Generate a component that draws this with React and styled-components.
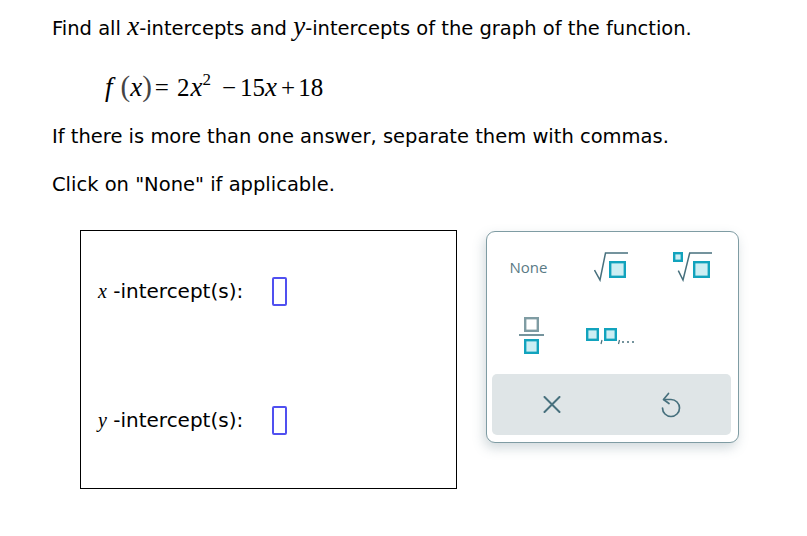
import React from "react";
import styled, { createGlobalStyle } from "styled-components";

const GlobalStyle = createGlobalStyle`
  html, body {
    margin: 0;
    padding: 0;
    background: #fff;
  }
`;

const Page = styled.div`
  width: 807px;
  height: 536px;
  padding: 14px 0 0 52px;
  box-sizing: border-box;
  font-family: "DejaVu Sans", Verdana, sans-serif;
  font-size: 19.5px;
  color: #000;
  overflow: hidden;
`;

const Line = styled.div`
  height: 24px;
  line-height: 24px;
  margin-bottom: ${(p) => p.$gap || 0}px;
  white-space: nowrap;
`;

const MathVar = styled.span`
  font-family: "Liberation Serif", "Times New Roman", serif;
  font-style: italic;
  font-size: ${(p) => p.$size || 27}px;
`;

const Equation = styled.div`
  height: 40px;
  line-height: 40px;
  margin: 0 0 19px 53px;
  font-family: "Liberation Serif", "Times New Roman", serif;
  font-size: 25px;
  white-space: nowrap;
`;

const Term = styled.span`
  margin-left: ${(p) => p.$ml || 0}px;
`;

const EqVar = styled.span`
  margin-left: ${(p) => p.$ml || 0}px;
  font-style: italic;
  font-size: 27px;
`;

const Paren = styled.span`
  margin-left: ${(p) => p.$ml || 0}px;
  color: #444;
  font-size: 29px;
`;

const Sup = styled.span`
  font-size: 17px;
  line-height: 0;
  vertical-align: 11px;
`;

const Work = styled.div`
  display: flex;
  align-items: flex-start;
  margin: 33px 0 0 28px;
`;

const AnswerBox = styled.div`
  width: 377px;
  height: 259px;
  box-sizing: border-box;
  border: 1px solid #000;
  padding: 40px 0 0 17px;
  display: flex;
  flex-direction: column;
  gap: 89px;
`;

const AnswerRow = styled.div`
  display: flex;
  align-items: center;
  height: 40px;
`;

const Label = styled.span`
  display: flex;
  align-items: baseline;
  width: 174px;
  font-size: 20px;
  white-space: nowrap;
`;

const Blank = styled.span`
  width: 15px;
  height: 29px;
  box-sizing: border-box;
  border: 2px solid #5050f0;
  border-radius: 2px;
`;

const Keypad = styled.div`
  width: 253px;
  height: 212px;
  box-sizing: border-box;
  margin: 1px 0 0 29px;
  border: 1px solid #7f9ca3;
  border-radius: 9px;
  background: #fff;
  box-shadow: -2px 5px 12px rgba(90, 120, 130, 0.28);
  padding: 5px 7px 6px 5px;
  display: flex;
  flex-direction: column;
`;

const KeyGrid = styled.div`
  display: grid;
  grid-template-columns: 78px 82px 82px;
  grid-template-rows: 60px 77px;
`;

const Key = styled.div`
  display: flex;
  align-items: center;
  justify-content: center;
`;

const NoneKey = styled(Key)`
  padding-right: 5px;
  color: #5a7a85;
  font-size: 15px;
  font-family: "Open Sans", "Noto Sans", sans-serif;
`;

const ActionBar = styled.div`
  height: 61px;
  border-radius: 5px;
  background: #dfe5e7;
  display: grid;
  grid-template-columns: 1fr 1fr;
`;

const ActionKey = styled.div`
  display: flex;
  align-items: center;
  justify-content: center;
`;

const Slate = "#47707d";
const Teal = "#12a3bd";
const Fill = "#cdeef3";

const Square = ({ x, y, w, h, grey }) => (
  <rect
    x={x}
    y={y}
    width={w}
    height={h}
    fill={grey ? "#fff" : Fill}
    stroke={grey ? "#7f9ca3" : Teal}
    strokeWidth="2.4"
  />
);

const SqrtIcon = () => (
  <svg width="34" height="30" viewBox="0 0 34 30" fill="none">
    <path d="M0.500 18 L6 28 L11.500 1 H34" stroke={Slate} strokeWidth="1.5" />
    <Square x={16.200} y={10.200} w={14.600} h={14.600} />
  </svg>
);

const RootIcon = () => (
  <svg width="40" height="30" viewBox="0 0 40 30" fill="none">
    <Square x={1.200} y={1.200} w={7.600} h={7.600} />
    <path d="M5.300 18.700 L10 28 L16.700 1 H39" stroke={Slate} strokeWidth="1.5" />
    <Square x={21.200} y={10.200} w={14.600} h={14.600} />
  </svg>
);

const FractionIcon = () => (
  <svg width="25" height="37" viewBox="0 0 25 37" fill="none">
    <Square x={6.200} y={1.200} w={12.600} h={12.600} grey />
    <path d="M0 18 H25" stroke={Slate} strokeWidth="1.5" />
    <Square x={6.200} y={23.200} w={12.600} h={12.600} />
  </svg>
);

const ListIcon = () => (
  <svg width="50" height="18" viewBox="0 0 50 18" fill="none">
    <Square x={1.200} y={2.200} w={10.600} h={10.600} />
    <Square x={19.200} y={2.200} w={10.600} h={10.600} />
    <path d="M16 13 L15 17 M33.500 13 L32.500 17" stroke={Slate} strokeWidth="1.2" />
    <circle cx="37" cy="15" r="1" fill={Slate} />
    <circle cx="42" cy="15" r="1" fill={Slate} />
    <circle cx="47" cy="15" r="1" fill={Slate} />
  </svg>
);

const CloseIcon = () => (
  <svg width="18" height="17" viewBox="0 0 18 17" fill="none">
    <path d="M1.500 1 L16.500 16 M16.500 1 L1.500 16" stroke={Slate} strokeWidth="2" strokeLinecap="round" />
  </svg>
);

const UndoIcon = () => (
  <svg width="21" height="26" viewBox="0 0 21 26" fill="none">
    <path d="M3 7.500 H10 A8.500 8.500 0 1 1 1.500 16" stroke={Slate} strokeWidth="1.7" strokeLinecap="round" />
    <path d="M7.500 1.500 L2.500 7.500 L8 11.500" stroke={Slate} strokeWidth="1.7" strokeLinecap="round" strokeLinejoin="round" />
  </svg>
);

export default function App() {
  return (
    <Page>
      <GlobalStyle />
      <Line $gap={28}>
        Find all <MathVar>x</MathVar>-intercepts and <MathVar>y</MathVar>-intercepts of the graph of the function.
      </Line>
      <Equation>
        <EqVar>f</EqVar>
        <Paren $ml={8}>(</Paren>
        <EqVar>x</EqVar>
        <Paren>)</Paren>
        <Term $ml={3}>=</Term>
        <Term $ml={8}>2</Term>
        <EqVar $ml={1}>x</EqVar>
        <Sup>2</Sup>
        <Term $ml={11}>−</Term>
        <Term $ml={4}>15</Term>
        <EqVar>x</EqVar>
        <Term $ml={4}>+</Term>
        <Term $ml={3}>18</Term>
      </Equation>
      <Line $gap={24}>If there is more than one answer, separate them with commas.</Line>
      <Line>Click on "None" if applicable.</Line>
      <Work>
        <AnswerBox>
          <AnswerRow>
            <Label>
              <MathVar $size={20}>x</MathVar>&nbsp;-intercept(s):
            </Label>
            <Blank />
          </AnswerRow>
          <AnswerRow>
            <Label>
              <MathVar $size={20}>y</MathVar>&nbsp;-intercept(s):
            </Label>
            <Blank />
          </AnswerRow>
        </AnswerBox>
        <Keypad>
          <KeyGrid>
            <NoneKey>None</NoneKey>
            <Key><SqrtIcon /></Key>
            <Key><RootIcon /></Key>
            <Key><FractionIcon /></Key>
            <Key><ListIcon /></Key>
          </KeyGrid>
          <ActionBar>
            <ActionKey><CloseIcon /></ActionKey>
            <ActionKey><UndoIcon /></ActionKey>
          </ActionBar>
        </Keypad>
      </Work>
    </Page>
  );
}
